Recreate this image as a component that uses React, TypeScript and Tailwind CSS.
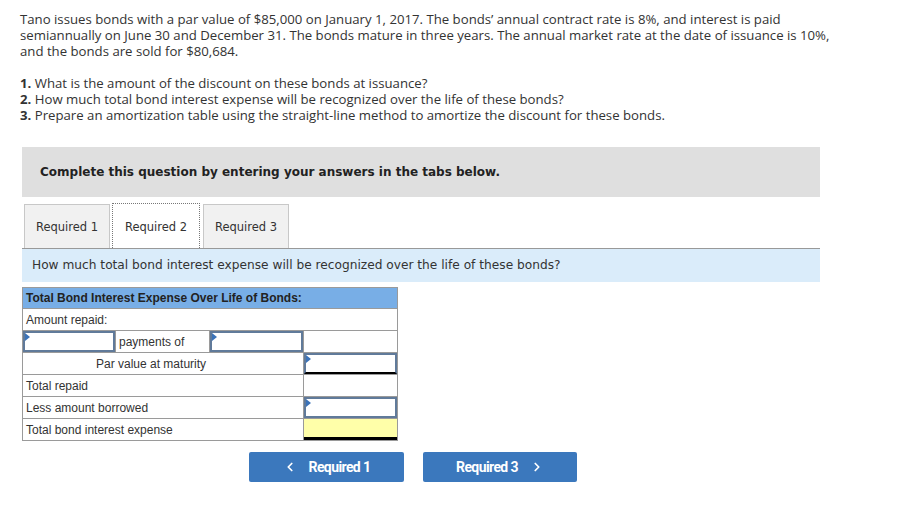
import React from 'react'
import { ChevronLeft, ChevronRight } from 'lucide-react'

const intro = "font-['Open_Sans',sans-serif] text-[13.2px] leading-[16px] text-[#333]"
const verdana = "font-['DejaVu_Sans',Verdana,sans-serif]"
const arial = "font-['Liberation_Sans',Arial,sans-serif]"

function Tri() {
  return (
    <span className="absolute left-0 top-0 w-0 h-0 border-t-[4px] border-b-[4px] border-l-[5px] border-t-transparent border-b-transparent border-l-[#3b73b9]" />
  )
}

function InputCell({ bottom = false }: { bottom?: boolean }) {
  return (
    <td className="p-0 border border-[#9a9a9a]">
      <div className={`relative h-[21px] border-2 border-[#607a9a] ${bottom ? 'border-b-black' : ''}`}>
        <Tri />
      </div>
    </td>
  )
}

const btn =
  "h-[30px] bg-[#3b78bd] rounded-[2px] text-white font-['Roboto',sans-serif] font-bold text-[14px] tracking-[-0.6px] flex items-center justify-center gap-[12px]"

export default function App() {
  return (
    <div className="bg-white w-[922px] h-[521px] relative">
      <div className={`${intro} pl-[20px] pt-[11px]`}>
        <p>
          Tano issues bonds with a par value of $85,000 on January 1, 2017. The bonds’ annual contract rate is 8%, and interest is paid
          <br />
          semiannually on June 30 and December 31. The bonds mature in three years. The annual market rate at the date of issuance is 10%,
          <br />
          and the bonds are sold for $80,684.
        </p>
        <p className="mt-[16px]">
          <b>1.</b> What is the amount of the discount on these bonds at issuance?
          <br />
          <b>2.</b> How much total bond interest expense will be recognized over the life of these bonds?
          <br />
          <b>3.</b> Prepare an amortization table using the straight-line method to amortize the discount for these bonds.
        </p>
      </div>

      <div className="ml-[22px] w-[798px]">
        <div className={`mt-[24px] h-[50px] bg-[#dfdfdf] flex items-center pl-[18px] ${verdana} text-[12px] font-bold text-[#222]`}>
          Complete this question by entering your answers in the tabs below.
        </div>

        <div className={`mt-[7px] flex items-end h-[44px] ${verdana} text-[11.5px] text-[#333]`}>
          <div className="ml-[2px] w-[86px] h-[44px] pt-[3px] bg-[#f1f1f1] border border-[#c8c8c8] border-b-0 flex items-center justify-center">
            Required 1
          </div>
          <div className="ml-[2px] w-[88px] h-[45px] pt-[3px] bg-white border border-dotted border-[#777] border-b-0 flex items-center justify-center relative z-10">
            Required 2
          </div>
          <div className="ml-[3px] w-[86px] h-[44px] pt-[3px] bg-[#f1f1f1] border border-[#c8c8c8] border-b-0 flex items-center justify-center">
            Required 3
          </div>
        </div>

        <div className={`h-[34px] bg-[#daecfa] border-t border-[#999] flex items-center pl-[10px] ${verdana} text-[12.2px] text-[#333]`}>
          How much total bond interest expense will be recognized over the life of these bonds?
        </div>

        <table className={`mt-[5px] border-collapse table-fixed w-[375px] ${arial} text-[12px] text-[#333]`}>
          <colgroup>
            <col className="w-[93px]" />
            <col className="w-[94px]" />
            <col className="w-[94px]" />
            <col className="w-[94px]" />
          </colgroup>
          <tbody>
            <tr className="h-[21px] bg-[#78aee6]">
              <td colSpan={4} className="border border-[#9a9a9a] px-[3px] py-0 font-bold text-[#222]">
                Total Bond Interest Expense Over Life of Bonds:
              </td>
            </tr>
            <tr className="h-[22px]">
              <td colSpan={4} className="border border-[#9a9a9a] px-[3px] py-0">Amount repaid:</td>
            </tr>
            <tr className="h-[22px]">
              <InputCell />
              <td className="border border-[#9a9a9a] px-[3px] py-0">payments of</td>
              <InputCell />
              <td className="border border-[#9a9a9a]"></td>
            </tr>
            <tr className="h-[22px]">
              <td colSpan={3} className="border border-[#9a9a9a] pl-[73px] py-0">Par value at maturity</td>
              <InputCell bottom />
            </tr>
            <tr className="h-[22px]">
              <td colSpan={3} className="border border-[#9a9a9a] px-[3px] py-0">Total repaid</td>
              <td className="border border-[#9a9a9a]"></td>
            </tr>
            <tr className="h-[22px]">
              <td colSpan={3} className="border border-[#9a9a9a] px-[3px] py-0">Less amount borrowed</td>
              <InputCell />
            </tr>
            <tr className="h-[22px]">
              <td colSpan={3} className="border border-[#9a9a9a] px-[3px] py-0">Total bond interest expense</td>
              <td className="border border-[#9a9a9a] p-0">
                <div className="h-[21px] bg-[#ffffa9] border-b-[3px] border-black" />
              </td>
            </tr>
          </tbody>
        </table>
      </div>

      <div className="flex gap-[19px] ml-[249px] mt-[11px]">
        <button className={`${btn} w-[155px]`}>
          <ChevronLeft size={14} strokeWidth={3} />
          <span>Required 1</span>
        </button>
        <button className={`${btn} w-[154px]`}>
          <span>Required 3</span>
          <ChevronRight size={14} strokeWidth={3} />
        </button>
      </div>
    </div>
  )
}
